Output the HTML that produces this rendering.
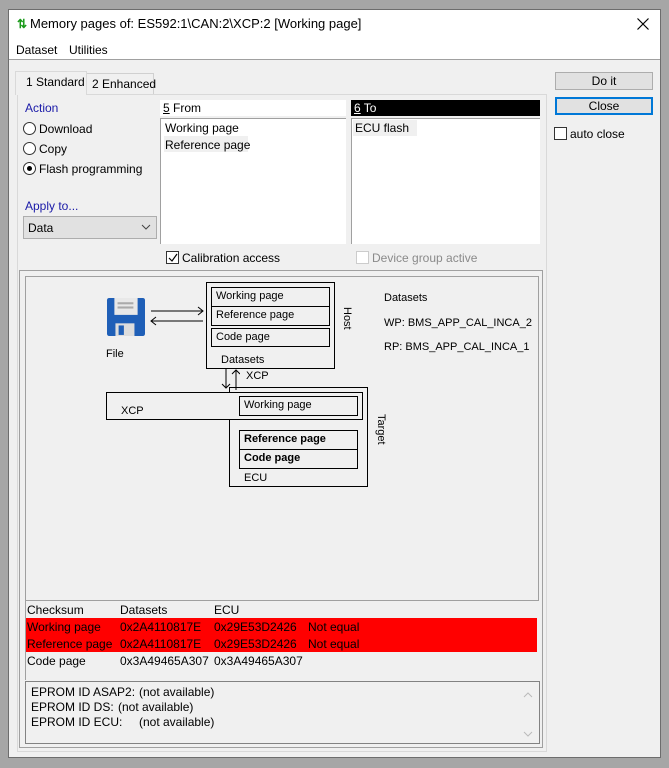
<!DOCTYPE html>
<html><head><meta charset="utf-8"><style>
*{margin:0;padding:0;box-sizing:border-box}
body{width:669px;height:768px;background:#a6a6a6;font-family:"Liberation Sans",sans-serif;font-size:12px;color:#000;position:relative;overflow:hidden}
.a{position:absolute}
.win{left:8px;top:9px;width:653px;height:749px;background:#f0f0f0;border:1px solid #6d6d6d}
.t{white-space:nowrap}
.d{font-size:11px}
.box{border:1px solid #000;background:transparent}
.radio{width:13px;height:13px;border:1px solid #333;border-radius:50%;background:#fff}
</style></head><body>
<div class="a win"></div>
<div class="a" style="left:9px;top:10px;width:651px;height:50px;background:#fff;border-bottom:1px solid #a0a0a0"></div>
<div class="a t" style="left:17px;top:17px;color:#1a9a1a;font-weight:bold;font-size:12px">⇅</div>
<div class="a t" style="left:30px;top:16px;font-size:13px">Memory pages of: ES592:1\CAN:2\XCP:2 [Working page]</div>
<svg class="a" style="left:637px;top:18px" width="12" height="12"><path d="M0.5 0.5L11.5 11.5M11.5 0.5L0.5 11.5" stroke="#000" stroke-width="1.2"/></svg>
<div class="a t" style="left:16px;top:43px">Dataset</div>
<div class="a t" style="left:69px;top:43px">Utilities</div>

<!-- tabs -->
<div class="a" style="left:17px;top:94px;width:530px;height:658px;border:1px solid #d9d9d9;background:#f0f0f0"></div>
<div class="a" style="left:86px;top:73px;width:68px;height:21px;border:1px solid #d0d0d0;border-bottom:none;background:#f0f0f0"></div>
<div class="a t" style="left:92px;top:77px">2 Enhanced</div>
<div class="a" style="left:15px;top:71px;width:72px;height:24px;border:1px solid #d9d9d9;border-bottom:none;background:#f0f0f0"></div>
<div class="a t" style="left:26px;top:75px">1 Standard</div>

<div class="a t" style="left:25px;top:101px;color:#1a1aa8">Action</div>
<div class="a radio" style="left:23px;top:122px"></div><div class="a t" style="left:39px;top:122px">Download</div>
<div class="a radio" style="left:23px;top:142px"></div><div class="a t" style="left:39px;top:142px">Copy</div>
<div class="a radio" style="left:23px;top:162px"></div><div class="a" style="left:27px;top:166px;width:5px;height:5px;border-radius:50%;background:#000"></div><div class="a t" style="left:39px;top:162px">Flash programming</div>
<div class="a t" style="left:25px;top:199px;color:#1a1aa8">Apply to...</div>
<div class="a" style="left:23px;top:216px;width:134px;height:23px;background:#e1e1e1;border:1px solid #adadad"></div>
<div class="a t" style="left:28px;top:221px">Data</div>
<svg class="a" style="left:141px;top:224px" width="10" height="7"><path d="M1 1L5 5L9 1" stroke="#444" fill="none"/></svg>

<div class="a" style="left:160px;top:100px;width:186px;height:16px;background:#fff"></div>
<div class="a t" style="left:163px;top:101px"><u>5</u> From</div>
<div class="a" style="left:160px;top:118px;width:186px;height:126px;background:#fff;border-left:1px solid #a0a0a0;border-top:1px solid #a0a0a0"></div>
<div class="a t" style="left:165px;top:121px">Working page</div>
<div class="a" style="left:164px;top:136px;width:84px;height:16px;background:#f0f0f0"></div>
<div class="a t" style="left:165px;top:138px">Reference page</div>

<div class="a" style="left:351px;top:100px;width:189px;height:16px;background:#000"></div>
<div class="a t" style="left:354px;top:101px;color:#fff"><u>6</u> To</div>
<div class="a" style="left:351px;top:118px;width:189px;height:126px;background:#fff;border-left:1px solid #a0a0a0;border-top:1px solid #a0a0a0"></div>
<div class="a" style="left:353px;top:120px;width:64px;height:16px;background:#f0f0f0"></div>
<div class="a t" style="left:355px;top:121px">ECU flash</div>

<div class="a" style="left:166px;top:251px;width:13px;height:13px;border:1px solid #333;background:#fff"></div>
<svg class="a" style="left:168px;top:253px" width="10" height="10"><path d="M1 5L4 8L9 1" stroke="#000" fill="none" stroke-width="1.2"/></svg>
<div class="a t" style="left:182px;top:251px">Calibration access</div>
<div class="a" style="left:356px;top:251px;width:13px;height:13px;border:1px solid #ccc;background:#fff"></div>
<div class="a t" style="left:372px;top:251px;color:#8a8a8a">Device group active</div>

<!-- diagram -->
<div class="a" style="left:19px;top:270px;width:524px;height:478px;border:1px solid #a0a0a0"></div>
<div class="a" style="left:25px;top:276px;width:514px;height:324px;border:1px solid #a0a0a0;border-bottom:none"></div>
<svg class="a" style="left:106px;top:298px" width="40" height="38" viewBox="0 0 36 36">
<rect x="0" y="0" width="36" height="36" rx="2" fill="#1f5fb7"/><rect x="7" y="0" width="22" height="16" fill="#e8e8e8"/><rect x="10" y="4" width="15" height="2" fill="#aaa"/><rect x="10" y="8" width="15" height="2" fill="#aaa"/><rect x="8" y="24" width="18" height="12" fill="#ddd"/><rect x="11" y="26" width="5" height="9" fill="#1f5fb7"/></svg>
<div class="a t d" style="left:106px;top:348px">File</div>
<svg class="a" style="left:148px;top:306px" width="60" height="20"><path d="M3 5H55M50 1L55 5L50 9M55 15H3M8 11L3 15L8 19" stroke="#000" fill="none"/></svg>
<div class="a box" style="left:206px;top:282px;width:129px;height:87px"></div>
<div class="a box" style="left:211px;top:287px;width:119px;height:39px"></div>
<div class="a" style="left:211px;top:306px;width:119px;height:1px;background:#000"></div>
<div class="a t d" style="left:216px;top:290px">Working page</div>
<div class="a t d" style="left:216px;top:309px">Reference page</div>
<div class="a box" style="left:211px;top:328px;width:119px;height:19px"></div>
<div class="a t d" style="left:216px;top:331px">Code page</div>
<div class="a t d" style="left:221px;top:354px">Datasets</div>
<div class="a t d" style="top:307px;transform:rotate(90deg);transform-origin:0 0;left:353px">Host</div>
<div class="a t d" style="left:384px;top:292px">Datasets</div>
<div class="a t d" style="left:384px;top:317px">WP: BMS_APP_CAL_INCA_2</div>
<div class="a t d" style="left:384px;top:341px">RP: BMS_APP_CAL_INCA_1</div>
<svg class="a" style="left:220px;top:368px" width="20" height="22"><path d="M6 0V20M2 16L6 20L10 16M16 22V2M12 6L16 2L20 6" stroke="#000" fill="none"/></svg>
<div class="a t d" style="left:246px;top:370px">XCP</div>
<div class="a box" style="left:229px;top:387px;width:139px;height:100px"></div>
<div class="a" style="left:106px;top:392px;width:257px;height:28px;border:1px solid #000;background:#f0f0f0"></div>
<div class="a t d" style="left:121px;top:405px">XCP</div>
<div class="a box" style="left:239px;top:396px;width:119px;height:20px"></div>
<div class="a t d" style="left:244px;top:399px">Working page</div>
<div class="a box" style="left:239px;top:430px;width:119px;height:39px"></div>
<div class="a" style="left:239px;top:449px;width:119px;height:1px;background:#000"></div>
<div class="a t d" style="left:244px;top:433px;font-weight:bold">Reference page</div>
<div class="a t d" style="left:244px;top:452px;font-weight:bold">Code page</div>
<div class="a t d" style="left:244px;top:472px">ECU</div>
<div class="a t d" style="left:387px;top:414px;transform:rotate(90deg);transform-origin:0 0">Target</div>

<!-- checksum -->
<div class="a" style="left:25px;top:600px;width:514px;height:1px;background:#a0a0a0"></div>
<div class="a" style="left:25px;top:600px;width:1px;height:80px;background:#a0a0a0"></div>
<div class="a" style="left:26px;top:618px;width:511px;height:34px;background:#ff0000"></div>
<div class="a t" style="left:27px;top:603px">Checksum</div><div class="a t" style="left:120px;top:603px">Datasets</div><div class="a t" style="left:214px;top:603px">ECU</div>
<div class="a t" style="left:27px;top:620px">Working page</div><div class="a t" style="left:120px;top:620px">0x2A4110817E</div><div class="a t" style="left:214px;top:620px">0x29E53D2426</div><div class="a t" style="left:308px;top:620px">Not equal</div>
<div class="a t" style="left:27px;top:637px">Reference page</div><div class="a t" style="left:120px;top:637px">0x2A4110817E</div><div class="a t" style="left:214px;top:637px">0x29E53D2426</div><div class="a t" style="left:308px;top:637px">Not equal</div>
<div class="a t" style="left:27px;top:654px">Code page</div><div class="a t" style="left:120px;top:654px">0x3A49465A307</div><div class="a t" style="left:214px;top:654px">0x3A49465A307</div>
<div class="a" style="left:25px;top:681px;width:515px;height:63px;border:1px solid #828282"></div>
<svg class="a" style="left:523px;top:692px" width="10" height="6"><path d="M1 5L5 1L9 5" stroke="#bbb" fill="none"/></svg>
<svg class="a" style="left:523px;top:731px" width="10" height="6"><path d="M1 1L5 5L9 1" stroke="#bbb" fill="none"/></svg>
<div class="a t" style="left:31px;top:685px">EPROM ID ASAP2:</div><div class="a t" style="left:139px;top:685px">(not available)</div>
<div class="a t" style="left:31px;top:700px">EPROM ID DS:</div><div class="a t" style="left:118px;top:700px">(not available)</div>
<div class="a t" style="left:31px;top:715px">EPROM ID ECU:</div><div class="a t" style="left:139px;top:715px">(not available)</div>

<!-- buttons -->
<div class="a" style="left:555px;top:72px;width:98px;height:18px;background:#e1e1e1;border:1px solid #adadad;text-align:center;line-height:16px">Do it</div>
<div class="a" style="left:555px;top:97px;width:98px;height:18px;background:#e1e1e1;border:2px solid #0078d7;text-align:center;line-height:14px">Close</div>
<div class="a" style="left:554px;top:127px;width:13px;height:13px;border:1px solid #333;background:#fff"></div>
<div class="a t" style="left:570px;top:127px">auto close</div>
</body></html>
